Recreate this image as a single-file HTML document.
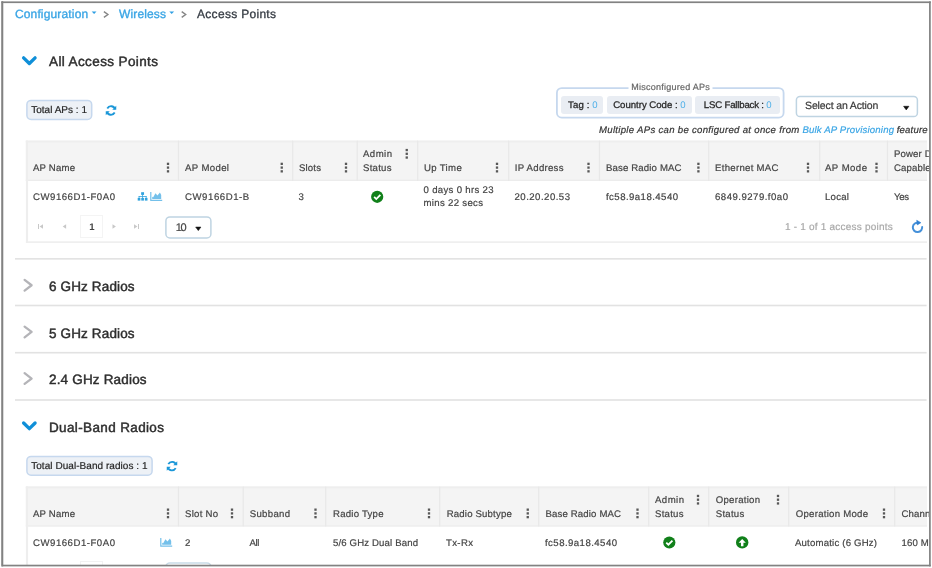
<!DOCTYPE html>
<html lang="en"><head><meta charset="utf-8"><title>Access Points</title>
<style>
html,body{margin:0;padding:0;background:#fff;}
body{width:932px;height:568px;position:relative;overflow:hidden;font-family:"Liberation Sans",sans-serif;text-rendering:geometricPrecision;}
#page{position:absolute;left:0;top:0;width:929px;height:565px;overflow:hidden;filter:blur(0.45px);}
.t{position:absolute;white-space:pre;line-height:20px;-webkit-text-stroke:0.2px currentColor;}
.t b{font-weight:normal;color:#4fb0e8;-webkit-text-stroke:0 transparent;}
.a{position:absolute;}
.chip{position:absolute;background:#e9edf3;border-radius:3px;}
svg{position:absolute;overflow:visible;}

</style></head>
<body>
<div id="page">
<svg class="lines" style="left:0;top:0" width="932" height="568" viewBox="0 0 932 568"><path d="M91.7 11.5 h4.8 l-2.4 2.6 z" fill="#2f9fe3"/><path d="M169.3 11.5 h4.8 l-2.4 2.6 z" fill="#2f9fe3"/><rect x="15" y="258.05" width="911.6" height="1.6" fill="#e2e2e2"/><rect x="15" y="304.7" width="911.6" height="1.6" fill="#e2e2e2"/><rect x="15" y="351.9" width="911.6" height="1.6" fill="#e2e2e2"/><rect x="15" y="399.2" width="911.6" height="1.6" fill="#e2e2e2"/><rect x="26.9" y="100.4" width="64.8" height="19" rx="4.2" fill="#edf1f6" stroke="#c6d8ee" stroke-width="1.5"/><rect x="26.9" y="456.4" width="125.2" height="18.8" rx="4.2" fill="#edf1f6" stroke="#c6d8ee" stroke-width="1.5"/><rect x="556.9" y="88.1" width="226.7" height="29.5" rx="4.8" fill="none" stroke="#c6d8ee" stroke-width="1.8"/><rect x="628.5" y="85" width="84" height="6" fill="#fff"/><rect x="796.4" y="96.4" width="121" height="20.2" rx="3.6" fill="#fff" stroke="#bfd4e2" stroke-width="1.5"/><path d="M903.6 106.3 h5.3 l-2.65 3.6 z" fill="#111" stroke="#111" stroke-width="0.6" stroke-linejoin="round"/><rect x="25.7" y="140.6" width="901.3" height="40.1" fill="#f4f4f4"/><rect x="25.7" y="140.6" width="901.3" height="1.8" fill="#eeeeee"/><rect x="25.7" y="179.7" width="901.3" height="1.2" fill="#ebebeb"/><rect x="177.85" y="140.6" width="1.2" height="40.1" fill="#e8e8e8"/><rect x="292.1" y="140.6" width="1.2" height="40.1" fill="#e8e8e8"/><rect x="356.6" y="140.6" width="1.2" height="40.1" fill="#e8e8e8"/><rect x="417.1" y="140.6" width="1.2" height="40.1" fill="#e8e8e8"/><rect x="508.1" y="140.6" width="1.2" height="40.1" fill="#e8e8e8"/><rect x="598.85" y="140.6" width="1.2" height="40.1" fill="#e8e8e8"/><rect x="708.1" y="140.6" width="1.2" height="40.1" fill="#e8e8e8"/><rect x="819.1" y="140.6" width="1.2" height="40.1" fill="#e8e8e8"/><rect x="886.85" y="140.6" width="1.2" height="40.1" fill="#e8e8e8"/><rect x="25.9" y="140.6" width="2.2" height="102.4" fill="#eeeeee"/><rect x="25.9" y="241.3" width="901.1" height="1.6" fill="#eeeeee"/><rect x="25.7" y="486.5" width="901.3" height="39.9" fill="#f4f4f4"/><rect x="25.7" y="486.5" width="901.3" height="1.8" fill="#eeeeee"/><rect x="25.7" y="525.4" width="901.3" height="1.2" fill="#ebebeb"/><rect x="177.85" y="486.5" width="1.2" height="39.9" fill="#e8e8e8"/><rect x="242.6" y="486.5" width="1.2" height="39.9" fill="#e8e8e8"/><rect x="325.1" y="486.5" width="1.2" height="39.9" fill="#e8e8e8"/><rect x="439.1" y="486.5" width="1.2" height="39.9" fill="#e8e8e8"/><rect x="538.1" y="486.5" width="1.2" height="39.9" fill="#e8e8e8"/><rect x="648.1" y="486.5" width="1.2" height="39.9" fill="#e8e8e8"/><rect x="708.1" y="486.5" width="1.2" height="39.9" fill="#e8e8e8"/><rect x="788.1" y="486.5" width="1.2" height="39.9" fill="#e8e8e8"/><rect x="894.1" y="486.5" width="1.2" height="39.9" fill="#e8e8e8"/><rect x="25.9" y="486.5" width="2.2" height="113.5" fill="#eeeeee"/><rect x="165.9" y="216.9" width="45" height="21" rx="4" fill="#fff" stroke="#bfd4e2" stroke-width="1.5"/><path d="M195.7 227.1 h5.2 l-2.6 3.5 z" fill="#111" stroke="#111" stroke-width="0.6" stroke-linejoin="round"/><path d="M922.04 226.18 A4.7 4.7 0 1 1 918.72 222.86" fill="none" stroke="#4590d9" stroke-width="2"/><path d="M916.7 220.3 L920.9 222.7 L917.3 224.9 Z" fill="#2f80d2" stroke="#2f80d2" stroke-width="0.6" stroke-linejoin="round"/><rect x="165.9" y="562.9" width="45" height="21" rx="4" fill="#fff" stroke="#c9dbe7" stroke-width="1.5"/><rect x="1.45" y="1.4" width="1.7" height="565" fill="#828282"/><rect x="929.05" y="1.4" width="1.7" height="565" fill="#828282"/></svg>
<div class="chip" style="left:561px;top:95.8px;width:42.4px;height:17.8px"></div>
<div class="chip" style="left:606.8px;top:95.8px;width:84.8px;height:17.8px"></div>
<div class="chip" style="left:694.6px;top:95.8px;width:85px;height:17.8px"></div>
<div class="a" style="left:80px;top:215px;width:23px;height:23px;box-sizing:border-box;border:1px solid #f4f4f4;background:#fff"></div>
<div class="a" style="left:38px;top:224.2px;width:1px;height:4.6px;background:#c8c8c8"></div>
<div class="a" style="left:138.2px;top:224.2px;width:1px;height:4.6px;background:#c8c8c8"></div>
<div class="a" style="left:80px;top:561px;width:23px;height:22.5px;box-sizing:border-box;border:1px solid #f2f2f2;background:#fff"></div>
<svg class="icons" style="left:0;top:0" width="932" height="568" viewBox="0 0 932 568"><g transform="translate(103.4 11.1) scale(1 1)"><path d="M0.5 0.5 L4.5 3.4 L0.5 6.3" fill="none" stroke="#858585" stroke-width="1.4"/></g>
<g transform="translate(181.2 11.1) scale(1 1)"><path d="M0.5 0.5 L4.5 3.4 L0.5 6.3" fill="none" stroke="#858585" stroke-width="1.4"/></g>
<g transform="translate(21.6 55.8) scale(1 1)"><path d="M2 2 L7.75 7.7 L13.5 2" fill="none" stroke="#0f8fd8" stroke-width="3.3" stroke-linecap="round" stroke-linejoin="round"/></g>
<g transform="translate(21.6 421) scale(1 1)"><path d="M2 2 L7.75 7.7 L13.5 2" fill="none" stroke="#0f8fd8" stroke-width="3.3" stroke-linecap="round" stroke-linejoin="round"/></g>
<g transform="translate(23 278.5) scale(1 1)"><path d="M1.6 1.4 L8.6 6.75 L1.6 12.1" fill="none" stroke="#b4b4b8" stroke-width="2.3" stroke-linecap="round" stroke-linejoin="round"/></g>
<g transform="translate(23 325.2) scale(1 1)"><path d="M1.6 1.4 L8.6 6.75 L1.6 12.1" fill="none" stroke="#b4b4b8" stroke-width="2.3" stroke-linecap="round" stroke-linejoin="round"/></g>
<g transform="translate(23 371.8) scale(1 1)"><path d="M1.6 1.4 L8.6 6.75 L1.6 12.1" fill="none" stroke="#b4b4b8" stroke-width="2.3" stroke-linecap="round" stroke-linejoin="round"/></g>
<g transform="translate(105 104.5) scale(0.5 0.5)"><g fill="none" stroke="#1b97d8" stroke-width="3.6"><path d="M20.3 9.2 A8.6 8.6 0 0 0 4.6 8"/><path d="M3.7 14.8 A8.6 8.6 0 0 0 19.4 16"/></g><path d="M22.5 2.5 V10.5 H14.5 Z" fill="#1b97d8"/><path d="M1.5 21.5 V13.5 H9.5 Z" fill="#1b97d8"/></g>
<g transform="translate(166 460.1) scale(0.5 0.5)"><g fill="none" stroke="#1b97d8" stroke-width="3.6"><path d="M20.3 9.2 A8.6 8.6 0 0 0 4.6 8"/><path d="M3.7 14.8 A8.6 8.6 0 0 0 19.4 16"/></g><path d="M22.5 2.5 V10.5 H14.5 Z" fill="#1b97d8"/><path d="M1.5 21.5 V13.5 H9.5 Z" fill="#1b97d8"/></g>
<g transform="translate(166.85 162.7) scale(1 1)"><rect width="2.3" height="2.3" fill="#585858"/><rect y="3.75" width="2.3" height="2.3" fill="#585858"/><rect y="7.5" width="2.3" height="2.3" fill="#585858"/></g>
<g transform="translate(280.6 162.7) scale(1 1)"><rect width="2.3" height="2.3" fill="#585858"/><rect y="3.75" width="2.3" height="2.3" fill="#585858"/><rect y="7.5" width="2.3" height="2.3" fill="#585858"/></g>
<g transform="translate(344.85 162.7) scale(1 1)"><rect width="2.3" height="2.3" fill="#585858"/><rect y="3.75" width="2.3" height="2.3" fill="#585858"/><rect y="7.5" width="2.3" height="2.3" fill="#585858"/></g>
<g transform="translate(495.85 162.7) scale(1 1)"><rect width="2.3" height="2.3" fill="#585858"/><rect y="3.75" width="2.3" height="2.3" fill="#585858"/><rect y="7.5" width="2.3" height="2.3" fill="#585858"/></g>
<g transform="translate(587.35 162.7) scale(1 1)"><rect width="2.3" height="2.3" fill="#585858"/><rect y="3.75" width="2.3" height="2.3" fill="#585858"/><rect y="7.5" width="2.3" height="2.3" fill="#585858"/></g>
<g transform="translate(697.25 162.7) scale(1 1)"><rect width="2.3" height="2.3" fill="#585858"/><rect y="3.75" width="2.3" height="2.3" fill="#585858"/><rect y="7.5" width="2.3" height="2.3" fill="#585858"/></g>
<g transform="translate(806.85 162.7) scale(1 1)"><rect width="2.3" height="2.3" fill="#585858"/><rect y="3.75" width="2.3" height="2.3" fill="#585858"/><rect y="7.5" width="2.3" height="2.3" fill="#585858"/></g>
<g transform="translate(875.35 162.7) scale(1 1)"><rect width="2.3" height="2.3" fill="#585858"/><rect y="3.75" width="2.3" height="2.3" fill="#585858"/><rect y="7.5" width="2.3" height="2.3" fill="#585858"/></g>
<g transform="translate(405.6 148.9) scale(1 1)"><rect width="2.3" height="2.3" fill="#585858"/><rect y="3.75" width="2.3" height="2.3" fill="#585858"/><rect y="7.5" width="2.3" height="2.3" fill="#585858"/></g>
<g transform="translate(166.85 508.5) scale(1 1)"><rect width="2.3" height="2.3" fill="#585858"/><rect y="3.75" width="2.3" height="2.3" fill="#585858"/><rect y="7.5" width="2.3" height="2.3" fill="#585858"/></g>
<g transform="translate(230.85 508.5) scale(1 1)"><rect width="2.3" height="2.3" fill="#585858"/><rect y="3.75" width="2.3" height="2.3" fill="#585858"/><rect y="7.5" width="2.3" height="2.3" fill="#585858"/></g>
<g transform="translate(314.35 508.5) scale(1 1)"><rect width="2.3" height="2.3" fill="#585858"/><rect y="3.75" width="2.3" height="2.3" fill="#585858"/><rect y="7.5" width="2.3" height="2.3" fill="#585858"/></g>
<g transform="translate(427.85 508.5) scale(1 1)"><rect width="2.3" height="2.3" fill="#585858"/><rect y="3.75" width="2.3" height="2.3" fill="#585858"/><rect y="7.5" width="2.3" height="2.3" fill="#585858"/></g>
<g transform="translate(526.6 508.5) scale(1 1)"><rect width="2.3" height="2.3" fill="#585858"/><rect y="3.75" width="2.3" height="2.3" fill="#585858"/><rect y="7.5" width="2.3" height="2.3" fill="#585858"/></g>
<g transform="translate(636.35 508.5) scale(1 1)"><rect width="2.3" height="2.3" fill="#585858"/><rect y="3.75" width="2.3" height="2.3" fill="#585858"/><rect y="7.5" width="2.3" height="2.3" fill="#585858"/></g>
<g transform="translate(882.85 508.5) scale(1 1)"><rect width="2.3" height="2.3" fill="#585858"/><rect y="3.75" width="2.3" height="2.3" fill="#585858"/><rect y="7.5" width="2.3" height="2.3" fill="#585858"/></g>
<g transform="translate(696.85 494.8) scale(1 1)"><rect width="2.3" height="2.3" fill="#585858"/><rect y="3.75" width="2.3" height="2.3" fill="#585858"/><rect y="7.5" width="2.3" height="2.3" fill="#585858"/></g>
<g transform="translate(776.85 494.8) scale(1 1)"><rect width="2.3" height="2.3" fill="#585858"/><rect y="3.75" width="2.3" height="2.3" fill="#585858"/><rect y="7.5" width="2.3" height="2.3" fill="#585858"/></g>
<g transform="translate(371.1 190.7) scale(0.50833 0.50833)"><circle cx="12" cy="12" r="12" fill="#11801a"/><path d="M6 12.3 L10.2 16.4 L18.2 8.2" fill="none" stroke="#fff" stroke-width="3.6" stroke-linecap="butt" stroke-linejoin="miter"/></g>
<g transform="translate(663.2 536.4) scale(0.50833 0.50833)"><circle cx="12" cy="12" r="12" fill="#11801a"/><path d="M6 12.3 L10.2 16.4 L18.2 8.2" fill="none" stroke="#fff" stroke-width="3.6" stroke-linecap="butt" stroke-linejoin="miter"/></g>
<g transform="translate(736 536.2) scale(0.51667 0.51667)"><circle cx="12" cy="12" r="12" fill="#11801a"/><path d="M12 5.2 L19 12.6 H14.4 V19.4 H9.6 V12.6 H5 Z" fill="#fff"/></g>
<g transform="translate(137.7 192.2) scale(0.57647 0.6)"><g fill="#2fa2de"><rect x="6" y="0" width="5" height="4.5"/><rect x="0" y="9.5" width="4.6" height="4.5"/><rect x="6.2" y="9.5" width="4.6" height="4.5"/><rect x="12.4" y="9.5" width="4.6" height="4.5"/><rect x="7.9" y="4" width="1.3" height="6"/><rect x="1.7" y="6.4" width="13.6" height="1.3"/><rect x="1.7" y="6.4" width="1.3" height="3.5"/><rect x="14" y="6.4" width="1.3" height="3.5"/></g></g>
<g transform="translate(150.2 192.1) scale(0.5 0.5)"><g fill="#74c0ea"><path d="M0 0 H2.4 V15.2 H24 V17.6 H0 Z"/><path d="M4 13.6 V9.5 L6 10.5 L10.5 2.5 L14.5 7 L19.5 1 L22 6 V13.6 Z"/></g></g>
<g transform="translate(160.2 537.9) scale(0.5 0.5)"><g fill="#74c0ea"><path d="M0 0 H2.4 V15.2 H24 V17.6 H0 Z"/><path d="M4 13.6 V9.5 L6 10.5 L10.5 2.5 L14.5 7 L19.5 1 L22 6 V13.6 Z"/></g></g>
<g transform="translate(39.6 224.2) scale(1 1)"><path d="M3.4 0 V4.6 L0 2.3 Z" fill="#c8c8c8"/></g>
<g transform="translate(62.7 224.2) scale(1 1)"><path d="M3.4 0 V4.6 L0 2.3 Z" fill="#c8c8c8"/></g>
<g transform="translate(112.5 224.2) scale(1 1)"><path d="M0 0 V4.6 L3.4 2.3 Z" fill="#c8c8c8"/></g>
<g transform="translate(134 224.2) scale(1 1)"><path d="M0 0 V4.6 L3.4 2.3 Z" fill="#c8c8c8"/></g></svg>
<span class="t" style="left:14.90px;top:4.00px;font-size:12px;color:#3aa5e5;letter-spacing:0.159px;-webkit-text-stroke:0.35px #3aa5e5;">Configuration</span>
<span class="t" style="left:119.00px;top:4.00px;font-size:12px;color:#3aa5e5;letter-spacing:0.141px;-webkit-text-stroke:0.35px #3aa5e5;">Wireless</span>
<span class="t" style="left:197.00px;top:4.00px;font-size:12px;color:#353b43;letter-spacing:0.302px;-webkit-text-stroke:0.3px #353b43;">Access Points</span>
<span class="t" style="left:49.00px;top:52.00px;font-size:13.5px;color:#2e2e2e;letter-spacing:0.388px;-webkit-text-stroke:0.45px #2e2e2e;">All Access Points</span>
<span class="t" style="left:49.00px;top:277.00px;font-size:13.5px;color:#2e2e2e;letter-spacing:0.141px;-webkit-text-stroke:0.45px #2e2e2e;">6 GHz Radios</span>
<span class="t" style="left:49.00px;top:324.00px;font-size:13.5px;color:#2e2e2e;letter-spacing:0.141px;-webkit-text-stroke:0.45px #2e2e2e;">5 GHz Radios</span>
<span class="t" style="left:49.00px;top:370.00px;font-size:13.5px;color:#2e2e2e;letter-spacing:0.177px;-webkit-text-stroke:0.45px #2e2e2e;">2.4 GHz Radios</span>
<span class="t" style="left:49.00px;top:418.00px;font-size:13.5px;color:#2e2e2e;letter-spacing:0.362px;-webkit-text-stroke:0.45px #2e2e2e;">Dual-Band Radios</span>
<span class="t" style="left:31.20px;top:101.00px;font-size:10px;color:#262626;letter-spacing:0.017px;-webkit-text-stroke:0.2px #262626;">Total APs : 1</span>
<span class="t" style="left:31.20px;top:457.00px;font-size:10px;color:#262626;letter-spacing:0.053px;-webkit-text-stroke:0.2px #262626;">Total Dual-Band radios : 1</span>
<span class="t" style="left:631.30px;top:77.00px;font-size:9px;color:#666;letter-spacing:0.247px;">Misconfigured APs</span>
<span class="t" style="left:568.00px;top:96.00px;font-size:9.6px;color:#2a2a2a;letter-spacing:0.131px;-webkit-text-stroke:0.3px currentColor;">Tag : <b>0</b></span>
<span class="t" style="left:613.20px;top:96.00px;font-size:9.6px;color:#2a2a2a;letter-spacing:-0.010px;-webkit-text-stroke:0.3px currentColor;">Country Code : <b>0</b></span>
<span class="t" style="left:703.80px;top:96.00px;font-size:9.6px;color:#2a2a2a;letter-spacing:-0.167px;-webkit-text-stroke:0.3px currentColor;">LSC Fallback : <b>0</b></span>
<span class="t" style="left:805.00px;top:96.00px;font-size:10.5px;color:#3a3a3a;letter-spacing:-0.128px;">Select an Action</span>
<span class="t" style="left:599.00px;top:121.00px;font-size:9.6px;color:#333;letter-spacing:0.295px;font-style:italic;">Multiple APs can be configured at once from</span>
<span class="t" style="left:802.40px;top:121.00px;font-size:9.6px;color:#3aa5e5;letter-spacing:0.171px;font-style:italic;">Bulk AP Provisioning</span>
<span class="t" style="left:896.80px;top:121.00px;font-size:9.6px;color:#333;letter-spacing:0.150px;font-style:italic;">feature</span>
<span class="t" style="left:33.00px;top:159.00px;font-size:9.6px;color:#444;letter-spacing:0.185px;">AP Name</span>
<span class="t" style="left:185.00px;top:159.00px;font-size:9.6px;color:#444;letter-spacing:0.368px;">AP Model</span>
<span class="t" style="left:299.00px;top:159.00px;font-size:9.6px;color:#444;letter-spacing:0.164px;">Slots</span>
<span class="t" style="left:363.00px;top:145.00px;font-size:9.6px;color:#444;letter-spacing:0.449px;">Admin</span>
<span class="t" style="left:363.00px;top:159.00px;font-size:9.6px;color:#444;letter-spacing:0.259px;">Status</span>
<span class="t" style="left:424.00px;top:159.00px;font-size:9.6px;color:#444;letter-spacing:0.339px;">Up Time</span>
<span class="t" style="left:514.75px;top:159.00px;font-size:9.6px;color:#444;letter-spacing:0.280px;">IP Address</span>
<span class="t" style="left:606.00px;top:159.00px;font-size:9.6px;color:#444;letter-spacing:0.147px;">Base Radio MAC</span>
<span class="t" style="left:715.00px;top:159.00px;font-size:9.6px;color:#444;letter-spacing:0.294px;">Ethernet MAC</span>
<span class="t" style="left:825.00px;top:159.00px;font-size:9.6px;color:#444;letter-spacing:0.451px;">AP Mode</span>
<span class="t" style="left:894.00px;top:145.00px;font-size:9.6px;color:#444;letter-spacing:0.150px;">Power Derate</span>
<span class="t" style="left:894.00px;top:159.00px;font-size:9.6px;color:#444;letter-spacing:0.150px;">Capable</span>
<span class="t" style="left:33.00px;top:188.00px;font-size:9.6px;color:#444;letter-spacing:0.523px;">CW9166D1-F0A0</span>
<span class="t" style="left:185.00px;top:188.00px;font-size:9.6px;color:#444;letter-spacing:0.562px;">CW9166D1-B</span>
<span class="t" style="left:298.50px;top:188.00px;font-size:9.6px;color:#444;letter-spacing:0.150px;">3</span>
<span class="t" style="left:423.50px;top:181.00px;font-size:9.6px;color:#444;letter-spacing:0.314px;">0 days 0 hrs 23</span>
<span class="t" style="left:423.50px;top:194.00px;font-size:9.6px;color:#444;letter-spacing:0.320px;">mins 22 secs</span>
<span class="t" style="left:514.50px;top:188.00px;font-size:9.6px;color:#444;letter-spacing:0.481px;">20.20.20.53</span>
<span class="t" style="left:606.00px;top:188.00px;font-size:9.6px;color:#444;letter-spacing:0.450px;">fc58.9a18.4540</span>
<span class="t" style="left:715.00px;top:188.00px;font-size:9.6px;color:#444;letter-spacing:0.484px;">6849.9279.f0a0</span>
<span class="t" style="left:825.00px;top:188.00px;font-size:9.6px;color:#444;letter-spacing:0.266px;">Local</span>
<span class="t" style="left:894.00px;top:188.00px;font-size:9.6px;color:#444;letter-spacing:-0.328px;">Yes</span>
<span class="t" style="left:89.30px;top:218.00px;font-size:9.6px;color:#444;letter-spacing:0.150px;font-weight:bold;-webkit-text-stroke:0 transparent;">1</span>
<span class="t" style="left:175.70px;top:218.00px;font-size:11px;color:#444;letter-spacing:-1.250px;">10</span>
<span class="t" style="left:785.00px;top:218.00px;font-size:10px;color:#a8a8a8;letter-spacing:0.213px;">1 - 1 of 1 access points</span>
<span class="t" style="left:33.00px;top:505.00px;font-size:9.6px;color:#444;letter-spacing:0.185px;">AP Name</span>
<span class="t" style="left:185.00px;top:505.00px;font-size:9.6px;color:#444;letter-spacing:0.255px;">Slot No</span>
<span class="t" style="left:249.75px;top:505.00px;font-size:9.6px;color:#444;letter-spacing:0.305px;">Subband</span>
<span class="t" style="left:333.00px;top:505.00px;font-size:9.6px;color:#444;letter-spacing:0.238px;">Radio Type</span>
<span class="t" style="left:446.75px;top:505.00px;font-size:9.6px;color:#444;letter-spacing:0.172px;">Radio Subtype</span>
<span class="t" style="left:545.50px;top:505.00px;font-size:9.6px;color:#444;letter-spacing:0.147px;">Base Radio MAC</span>
<span class="t" style="left:655.00px;top:491.00px;font-size:9.6px;color:#444;letter-spacing:0.449px;">Admin</span>
<span class="t" style="left:655.00px;top:505.00px;font-size:9.6px;color:#444;letter-spacing:0.259px;">Status</span>
<span class="t" style="left:715.75px;top:491.00px;font-size:9.6px;color:#444;letter-spacing:0.264px;">Operation</span>
<span class="t" style="left:715.75px;top:505.00px;font-size:9.6px;color:#444;letter-spacing:0.259px;">Status</span>
<span class="t" style="left:795.75px;top:505.00px;font-size:9.6px;color:#444;letter-spacing:0.266px;">Operation Mode</span>
<span class="t" style="left:901.50px;top:505.00px;font-size:9.6px;color:#444;letter-spacing:0.150px;">Channel Width</span>
<span class="t" style="left:33.00px;top:534.00px;font-size:9.6px;color:#444;letter-spacing:0.523px;">CW9166D1-F0A0</span>
<span class="t" style="left:185.00px;top:534.00px;font-size:9.6px;color:#444;letter-spacing:0.150px;">2</span>
<span class="t" style="left:249.50px;top:534.00px;font-size:9.6px;color:#444;letter-spacing:-0.336px;">All</span>
<span class="t" style="left:333.00px;top:534.00px;font-size:9.6px;color:#444;letter-spacing:0.146px;">5/6 GHz Dual Band</span>
<span class="t" style="left:446.00px;top:534.00px;font-size:9.6px;color:#444;letter-spacing:0.355px;">Tx-Rx</span>
<span class="t" style="left:545.00px;top:534.00px;font-size:9.6px;color:#444;letter-spacing:0.450px;">fc58.9a18.4540</span>
<span class="t" style="left:795.00px;top:534.00px;font-size:9.6px;color:#444;letter-spacing:0.193px;">Automatic (6 GHz)</span>
<span class="t" style="left:901.50px;top:534.00px;font-size:9.6px;color:#444;letter-spacing:0.150px;">160 MHz</span>
</div>
<svg class="lines" style="left:0;top:0;filter:blur(0.35px)" width="932" height="568" viewBox="0 0 932 568"><rect x="1.45" y="1.4" width="1.7" height="565" fill="#828282"/><rect x="929.05" y="1.4" width="1.7" height="565" fill="#828282"/><rect x="1.45" y="1.4" width="929.3" height="1.7" fill="#828282"/><rect x="1.45" y="564.7" width="929.3" height="1.7" fill="#828282"/></svg>
</body></html>
